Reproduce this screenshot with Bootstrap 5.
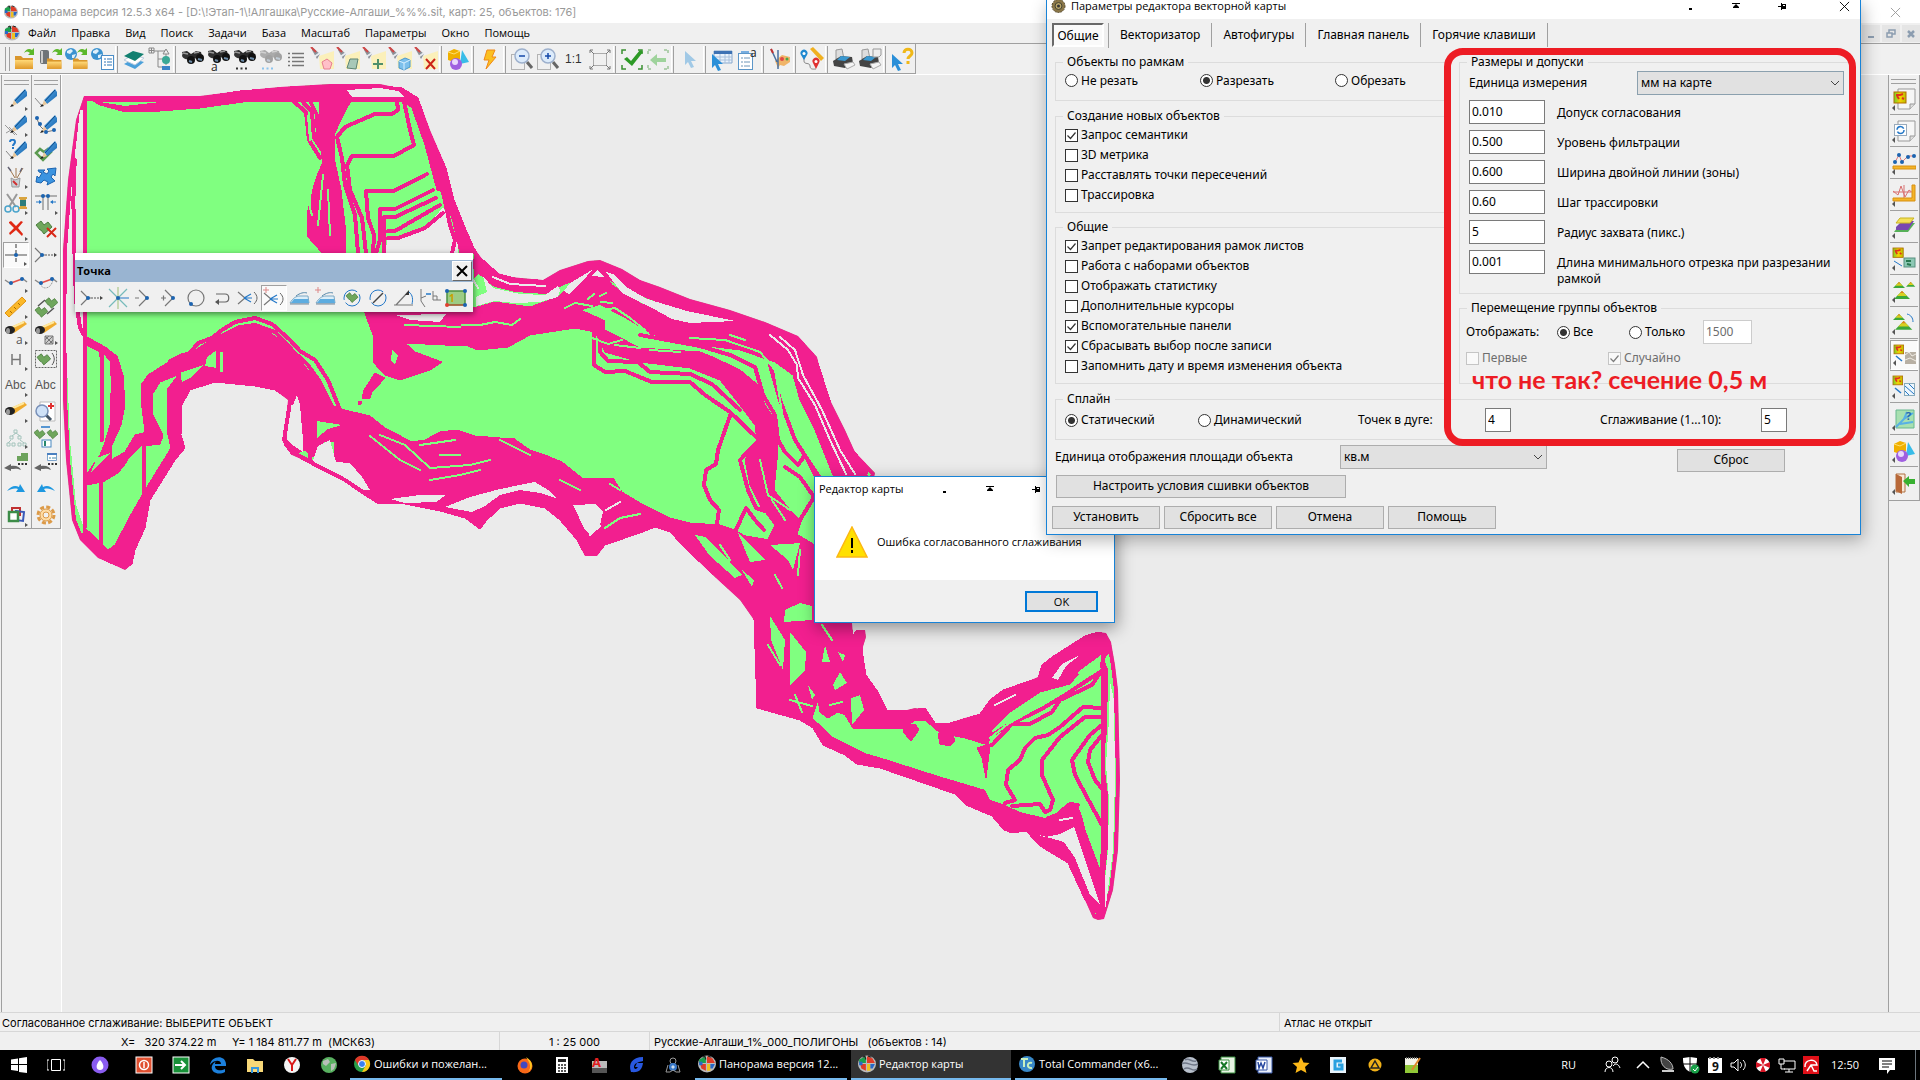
<!DOCTYPE html>
<html lang="ru">
<head>
<meta charset="utf-8">
<meta name="viewport" content="width=device-width, initial-scale=1">
<title>Панорама</title>
<link rel="stylesheet" href="https://cdn.jsdelivr.net/npm/bootstrap@5.3.0/dist/css/bootstrap.min.css">
<style>
:root{--face:#f0f0f0;--map:#ebebeb;--edge:#a0a0a0;--accent:#1883d7}
body{font:11px/16px "Open Sans","Noto Sans",sans-serif;color:#000;background:var(--face);overflow:hidden}
button,input,select{font:inherit;color:inherit}
button{padding:0;border:0;background:none}
.app-title{height:23px;background:#fff;color:#999;font-family:Inter,"Noto Sans",sans-serif}
.app-title button{margin-right:19px}
.app-menu{height:20px}
.app-menu a{color:#000;text-decoration:none}
.menu-links{column-gap:15px}
.mdi{gap:2px;color:#8c9db0}
.mdi button{width:18px;height:17px;background:#e5e5e5;display:block}
.main-tools{height:32px;border-top:1px solid var(--edge);border-bottom:1px solid #fff}
.main-strip{height:30px;padding-left:11px;border-right:1px solid var(--edge);border-bottom:1px solid var(--edge);position:relative}
.grip-v{position:absolute;left:5px;top:3px;width:5px;height:24px;border:solid var(--edge);border-width:0 1px}
.tool{width:26px;height:26px;display:flex;align-items:center;justify-content:center;position:relative}
.tool svg{width:24px;height:24px;display:block}
.tool.pressed{background:#fafafa;border:1px solid;border-color:var(--edge) #fff #fff var(--edge)}
.tool.more::after{content:"";position:absolute;right:1px;bottom:1px;border:solid transparent;border-width:2px 0 2px 3px;border-left-color:#555}
.bar-sep{width:6px;height:26px;border-left:1px solid #fff;position:relative}
.bar-sep::before{content:"";position:absolute;left:1px;top:0;height:27px;border-left:1px solid var(--edge)}
.work{min-height:0}
.side{width:62px;padding-left:1px;border-right:1px solid #fff}
.side-in{border-left:1px solid var(--edge);height:100%}
.side-col{width:30px;padding:5px 0 0 1px;border-right:1px solid var(--edge);border-bottom:1px solid var(--edge)}
.grip-h{height:5px;margin:0 2px 1px 1px;border:solid var(--edge);border-width:1px 0}
.rside{width:32px;border-left:1px solid var(--edge)}
.rcol{padding:4px 1px 0;border-right:1px solid var(--edge);border-bottom:1px solid var(--edge)}
.rcol .tool{width:28px;height:30px;margin:0 0 2px;box-shadow:0 1px 0 var(--edge)}
.rcol .tool:last-child{box-shadow:none}
.rcol .tool::after{content:"";position:absolute;left:2px;bottom:3px;border:solid transparent;border-width:3px 3px 3px 0;border-right-color:#555}
.rcol .grip-h{margin-bottom:0}
.map-pane{background:var(--map);min-width:0}
.map-pane>svg{display:block;width:100%;height:100%}
.status{height:19px;border-top:1px solid #d7d7d7;font-family:Inter,"Noto Sans",sans-serif}
.status>div{padding:2px 0 0 2px;white-space:pre}
.status .cell{border-left:1px solid #d7d7d7;padding-left:4px}
.status .c-atlas{width:641px}.status .c-xy{width:499px;padding-left:121px}.status .c-scale{width:150px;padding-left:0}
.win{position:absolute;background:var(--face)}
.palette{left:75px;top:253px;width:398px;height:59px;box-shadow:1px 2px 6px rgba(0,0,0,.5)}
.palette-title{height:22px;background:#99b4d1;font-weight:700;padding-left:2px}
.palette-close{width:20px;height:20px;background:var(--face);border:1px solid;border-color:#fff #696969 #696969 #fff;margin-right:1px;display:flex;align-items:center;justify-content:center}
.palette-top{height:7px;background:#fff}
.palette-tools{padding:3px 0 0 4px}
.msg{left:814px;top:476px;width:301px;height:147px;border:1px solid var(--accent);background:#fff;box-shadow:2px 5px 16px rgba(0,0,0,.4)}
.msg-title span{width:106px}
.msg-body{padding:6px 0 0 21px;gap:9px}
.msg-foot{height:42px;background:var(--face);padding:11px 16px 0 0}
.msg-ok{width:73px;height:21px;border:2px solid #0078d7;background:#e1e1e1}
.dlg{left:1046px;top:0;width:815px;height:535px;border:1px solid var(--accent);border-top:0;box-shadow:2px 5px 16px rgba(0,0,0,.3);font:12px/16px "Noto Sans","Open Sans",sans-serif}
.dlg-title{height:19px;background:#fff;font-family:"Open Sans",sans-serif;font-size:11px;padding:0 10px 0 4px}
.dlg-title span{padding-left:5px;margin-top:-2px}
.dlg-title button,.msg-title button{width:46px;height:12px}
.dlg-title svg,.msg-title svg{display:block}
.dlg-title .x-btn{width:45px;padding-left:34px}
.dlg-tabs{padding:4px 0 0 5px;height:29px}
.dlg-tabs button{height:24px;padding:0 11px 1px;border-right:1px solid var(--edge)}
.dlg-tabs button.on{width:52px;padding:2px 0 0;margin-right:4px;background:#fafafa;border:2px solid;border-color:#696969 #fff #fff #696969;height:24px}
.dlg-tabs .bar{width:1px;background:var(--edge)}
.dlg-body{padding:6px 6px 0 8px}
.grp{border:1px solid #dcdcdc;margin:0;padding:0 9px;min-width:0}
.grp legend{float:none;width:auto;margin:0 0 0 -2px;padding:0 4px;font-size:12px;line-height:16px}
.g-cut{height:47px}.g-cut .opt{flex:0 0 135px;padding-top:1px}
.g-new,.g-gen{padding:1px 9px 7px}
.g-new{margin-top:7px}.g-gen{margin-top:6px}
.g-size{height:240px}
.unit-row{padding-top:1px;margin-bottom:5px}
.g-move{height:84px;margin-top:6px;padding:4px 6px 0}
.g-move legend{margin-left:1px}
.g-move span{width:91px}.g-move .w1{width:72px}.g-move .w2{width:74px}.g-move .w3{width:142px}.g-move .fld{width:49px}
.g-spl{height:49px;margin-top:7px;padding-top:1px}
.g-spl .w1{width:133px}.g-spl .w2{width:160px}.g-spl .w3{width:127px}.g-spl .w4{width:161px;margin-left:89px}
.g-spl .fld{width:26px}
.opt{display:flex;align-items:center;height:20px;gap:3px}
.opt input{appearance:none;width:13px;height:13px;margin:0;border:1px solid #333;background:#fff;flex:none}
.opt input[type=radio]{border-radius:50%}
.opt input[type=radio]:checked{background:radial-gradient(circle,#333 0 3px,#fff 4px)}
.opt input[type=checkbox]:checked{background:#fff url("data:image/svg+xml,%3Csvg xmlns='http://www.w3.org/2000/svg' viewBox='0 0 11 11'%3E%3Cpath d='M1.5 5.5l3 3 5-6' fill='none' stroke='%23333' stroke-width='1.2'/%3E%3C/svg%3E")}
.opt.off{color:#6d6d6d}.opt.off input{border-color:#aaa;opacity:.6}
.fld{height:24px;border:1px solid #7a7a7a;background:#fff;padding:0 2px 2px;border-radius:0}
.fld:disabled{border-color:#ccc;color:#6d6d6d}
.pick{width:207px;height:24px;border:1px solid #adadad;border-radius:0;padding:0 3px;appearance:none;background:#e1e1e1 url("data:image/svg+xml,%3Csvg xmlns='http://www.w3.org/2000/svg' viewBox='0 0 10 10'%3E%3Cpath d='M1 3l4 4 4-4' fill='none' stroke='%23444'/%3E%3C/svg%3E") no-repeat right 3px center/10px}
.pick.unit{border-color:#8ba0ae}
.push{height:23px;width:108px;border:1px solid #adadad;background:#e1e1e1;padding-bottom:1px}
.area-row{margin-top:5px}.area-row label{width:285px;margin-top:4px}.area-row .push{margin:4px 0 0 130px}
.push.wide{width:290px;margin:3px 0 0 1px}
.push-row{margin:8px 0 0 -3px;gap:4px}
.colL{width:391px}.colR{width:395px}
.size-row{gap:12px;height:30px}
.size-row .fld{width:76px}.size-row label{margin-top:5px}
.note-box{position:absolute;left:397px;top:48px;width:412px;height:398px;border:7px solid #ed1c24;border-radius:19px;pointer-events:none}
.note-text{position:absolute;left:425px;top:364px;font:700 25px/30px Lato,sans-serif;color:#ed1c24;white-space:nowrap}
.taskbar{height:30px;background:#000;color:#fff}
.tk{width:37px;height:30px;display:flex;align-items:center;justify-content:center;flex:none}
.tk svg,.tk-win svg{width:18px;height:18px;flex:none}
.tk-win{width:152px;height:30px;padding-left:3px;gap:3px;display:flex;align-items:center;border-bottom:2px solid #76b9ed;flex:none;white-space:nowrap}
.tk-win.active{width:160px;background:#333;padding-left:7px}
.tk-first{margin-left:3px}
.tk-set{padding-left:4px}
.tk-gap{width:7px}
.tray .tk{width:24px}
</style>
<script src="https://cdn.jsdelivr.net/npm/bootstrap@5.3.0/dist/js/bootstrap.bundle.min.js"></script>
</head>
<body class="d-flex flex-column vh-100 position-relative">

<svg width="0" height="0" class="position-absolute" aria-hidden="true">
<defs>
<linearGradient id="gy" x1="0" y1="0" x2="0" y2="1"><stop offset="0" stop-color="#ffd978"/><stop offset="1" stop-color="#e0992a"/></linearGradient>
<linearGradient id="gb" x1="0" y1="0" x2="1" y2="1"><stop offset="0" stop-color="#5ab0f0"/><stop offset="1" stop-color="#1560a8"/></linearGradient>
<linearGradient id="heat"><stop offset="0" stop-color="#6fd12a"/><stop offset=".5" stop-color="#f8d000"/><stop offset="1" stop-color="#b8c000"/></linearGradient>
<g id="p-folder"><path d="M0 3h6l2 2h10v11H0z" fill="#d9962c"/><path d="M0 7h18v9H0z" fill="url(#gy)"/></g>
<g id="p-arr"><path d="M0 5C2 1 5 0 8 2l2-2v7H4l2-2C4 3 2 3 0 5z" fill="#5cb82a"/></g>
<g id="p-globe"><circle cx="6" cy="6" r="6" fill="#3b93d0"/><path d="M2 3l4-2 2 2-3 3-3-1zM7 7l4-1-2 4-2 0z" fill="#dff0fa"/></g>
<g id="p-pencil"><path d="M21 2l2 3v4L13 17l-3-4z" fill="url(#gb)"/><path d="M10 13l3 4-5 2z" fill="#e8c79a"/><path d="M8 17l2 2-4 1z" fill="#222"/><path d="M21 3L11 14" stroke="#0d4a85"/></g>
<g id="p-green"><path d="M0 5l5-4 3 4 4-3 4 5-8 7-3-4-1 0z" fill="#6fa65c" stroke="#4b7d3e"/></g>
<g id="p-bino"><path d="M2 3l5-1 4 3 5-3 5 1 1 4-4 3-5-1-3 2-6-3z" fill="#2a2a2a"/><ellipse cx="6" cy="7" rx="4" ry="3" fill="#333" transform="rotate(25 6 7)"/><ellipse cx="11" cy="11" rx="4" ry="4" fill="#111"/><ellipse cx="20" cy="9" rx="4" ry="4" fill="#111"/><path d="M3 4l5 1M14 4l5-1" stroke="#999" stroke-width="1.500"/><path d="M9 12l3 1M18 10l4 1" stroke="#6d8ca8" stroke-width="2"/></g>
<g id="p-torch"><path d="M9 9L24 4V22H10z" fill="#fff0a8" opacity=".75"/><path d="M2 0l8 7-3 5-5-9z" fill="#8c9198"/><path d="M1 0l5 5" stroke="#d04848" stroke-width="2"/><path d="M4 10l6-4" stroke="#e8ecf0" stroke-width="2"/></g>
<g id="p-flash"><path d="M7 9L20 3l3 3-13 9z" fill="#f0ac2e"/><path d="M9 9l11-5" stroke="#ffe9a0" stroke-width="2"/><ellipse cx="6" cy="12" rx="5" ry="4" fill="#222"/><ellipse cx="4" cy="13" rx="2" ry="3" fill="#999"/></g>
<g id="p-heat"><rect width="12" height="11" fill="url(#heat)" stroke="#b36b00"/><path d="M2 3h4l3-1M3 4l2 3M8 6l2 1" stroke="#e0301c" stroke-width="2" fill="none"/></g>
<g id="p-cur"><path d="M0 0v14l3-3 3 6 3-1-3-6h5z" fill="#2a8fd8"/></g>
<symbol id="logo" viewBox="0 0 16 16"><ellipse cx="8" cy="8" rx="8" ry="7.500" fill="#bbb"/><path d="M1 4l6-3v6H1z" fill="#1ba04c"/><path d="M8 1l5 2 2 4H8z" fill="#e03c28"/><path d="M2 8h5v6l-4-2z" fill="#e03c28"/><path d="M8 8h3v6H8z" fill="#f0c020"/><path d="M1 6h3v3H1zM11 8h4l-2 4h-2z" fill="#2868c8"/><path d="M4 2l2-1 1 3M9 1l3 1" stroke="#222" fill="none"/></symbol>
<symbol id="open" viewBox="0 0 24 24"><use href="#p-folder" x="3" y="6"/><use href="#p-arr" x="12" y="1"/></symbol>
<symbol id="opendb" viewBox="0 0 24 24"><rect x="2" y="3" width="9" height="14" rx="2" fill="#6f7478"/><path d="M4 4v12" stroke="#ccc" stroke-width="2"/><use href="#p-folder" transform="translate(9 9) scale(.8)"/><use href="#p-arr" x="14" y="1"/></symbol>
<symbol id="openweb" viewBox="0 0 24 24"><use href="#p-globe" x="1" y="1"/><use href="#p-folder" transform="translate(9 9) scale(.8)"/><use href="#p-arr" x="13" y="1"/></symbol>
<symbol id="weblist" viewBox="0 0 24 24"><use href="#p-globe" x="1" y="1"/><rect x="11.500" y="8.500" width="12" height="14" fill="#fff" stroke="#4b8ec8"/><path d="M14 12h2m1 0h5M14 15h2m1 0h5M14 18h2m1 0h5" stroke="#2e75b5"/></symbol>
<symbol id="layers" viewBox="0 0 24 24"><path d="M2 17l9-5 11 3-9 7z" fill="#4aa0da"/><path d="M2 13l9-5 11 3-9 7z" fill="#fff" stroke="#bcd"/><path d="M2 9l9-5 11 3-9 7z" fill="#128070"/></symbol>
<symbol id="tree" viewBox="0 0 24 24"><path d="M1 1h5v5H1zM1 3.500h5M3.500 1v5M6 4h12v14M10 4v16h4M10 12h5" fill="none" stroke="#888"/><circle cx="18" cy="13" r="4" fill="#3aa896"/><path d="M18 2l3 5h-6z" fill="#eee" stroke="#888"/><rect x="14" y="19" width="8" height="4" fill="#3b84c8"/></symbol>
<symbol id="bino" viewBox="0 0 24 24"><use href="#p-bino" y="2"/></symbol>
<symbol id="binoa" viewBox="0 0 24 24"><use href="#p-bino" y="1"/><text x="5" y="24" font-size="12" fill="#222">a</text></symbol>
<symbol id="binod" viewBox="0 0 24 24"><use href="#p-bino" y="1"/><path d="M4 21.500h12" stroke="#333" stroke-width="2" stroke-dasharray="2 2.500"/></symbol>
<symbol id="binox" viewBox="0 0 24 24"><g opacity=".35"><use href="#p-bino" y="1"/></g><path d="M4 21.500h12" stroke="#8cc4ee" stroke-width="2" stroke-dasharray="2 2.500"/></symbol>
<symbol id="list" viewBox="0 0 24 24"><path d="M4 6.500h2m2 0h12M4 10.500h2m2 0h12M4 14.500h2m2 0h12M4 18.500h2m2 0h12" stroke="#777" stroke-width="1.500"/></symbol>
<symbol id="t1" viewBox="0 0 24 24"><use href="#p-torch"/><path d="M12 15l5-3 5 4-2 6h-6z" fill="#ffc0c8" stroke="#e88090"/></symbol>
<symbol id="t2" viewBox="0 0 24 24"><use href="#p-torch"/><path d="M14 12h8l-2 10-9-1z" fill="#a8c8b8" stroke="#5c8474"/></symbol>
<symbol id="t3" viewBox="0 0 24 24"><use href="#p-torch"/><path d="M16 12v10M11 17h10" stroke="#4f8f6a" stroke-width="2"/></symbol>
<symbol id="t4" viewBox="0 0 24 24"><use href="#p-torch"/><path d="M11 14l6-3 5 2v7l-6 3-5-2z" fill="#7cc0ec" stroke="#4a98cc"/><path d="M11 14l5 2 6-3M16 16v7" stroke="#d8f0ff" fill="none"/></symbol>
<symbol id="t5" viewBox="0 0 24 24"><use href="#p-torch"/><path d="M12 12l9 10M21 12l-9 10" stroke="#cc2418" stroke-width="2"/></symbol>
<symbol id="shapes" viewBox="0 0 24 24"><path d="M16 3l7 12-9 2z" fill="#38bce8"/><path d="M2 5l6-3 6 2v8l-6 3-6-2z" fill="#f0b000"/><path d="M2 5l6 2 6-3" stroke="#ffe070" fill="none"/><circle cx="10" cy="17" r="6" fill="#a060e0"/><circle cx="9" cy="15" r="3" fill="#ead8fc"/></symbol>
<symbol id="bolt" viewBox="0 0 24 24"><path d="M9 3h8l-3 7h4L8 22l3-9H6z" fill="#fbc020" stroke="#f08818"/></symbol>
<symbol id="zout" viewBox="0 0 24 24"><rect x="1.500" y="7.500" width="13" height="15" fill="none" stroke="#777" stroke-dasharray="1 1"/><path d="M17 15l5 6" stroke="#666" stroke-width="3"/><circle cx="12" cy="9" r="7" fill="#dcebfb" stroke="#9db0cc" stroke-width="1.500"/><path d="M9 9h6" stroke="#1548a8" stroke-width="1.500"/></symbol>
<symbol id="zin" viewBox="0 0 24 24"><use href="#zout" width="24" height="24"/><path d="M12 6v6" stroke="#1548a8" stroke-width="1.500"/></symbol>
<symbol id="one" viewBox="0 0 24 24"><text x="3" y="16" font-size="12" font-family="Liberation Sans" fill="#333">1:1</text></symbol>
<symbol id="fit" viewBox="0 0 24 24"><rect x="5.500" y="6.500" width="13" height="12" fill="none" stroke="#666" stroke-dasharray="1 1"/><path d="M2 6V3h3M2 3l4 4M19 3h3v3M22 3l-4 4M2 19v3h3M2 22l4-4M19 22h3v-3M22 22l-4-4" fill="none" stroke="#777"/></symbol>
<symbol id="okk" viewBox="0 0 24 24"><path d="M2 7V3h4M18 3h4v4M2 18v4h4M18 22h4v-4" fill="none" stroke="#3a9030" stroke-width="1.500"/><path d="M4 12l3-2 4 4L20 3l3 2-11 14z" fill="#2d9a26"/></symbol>
<symbol id="backk" viewBox="0 0 24 24"><g opacity=".45"><path d="M2 7V3h4M18 3h4v4M2 18v4h4M18 22h4v-4" fill="none" stroke="#3a9030" stroke-width="1.500" stroke-dasharray="3 1"/><path d="M4 13l7-6v4h9v4h-9v4z" fill="#3fb038"/></g></symbol>
<symbol id="curx" viewBox="0 0 24 24"><use href="#p-cur" x="7" y="4" opacity=".4"/></symbol>
<symbol id="curtab" viewBox="0 0 24 24"><path d="M4 4h18v12H4z" fill="#eaf2fb" stroke="#88a8cc"/><path d="M4 4h18v3H4z" fill="#3e72b4"/><path d="M4 10h18M4 13h18M10 7v9M15 7v9M19 7v9" stroke="#a8c0dc"/><use href="#p-cur" x="2" y="7"/></symbol>
<symbol id="lista" viewBox="0 0 24 24"><rect x="2.500" y="6.500" width="14" height="16" fill="#fff" stroke="#5c96c8"/><path d="M5 6V4h8v2" fill="#78aee0"/><path d="M5 11h2m1 0h6M5 15h2m1 0h6M5 19h2m1 0h6" stroke="#6f96b8"/><text x="14" y="10" font-size="12" fill="#222">a</text></symbol>
<symbol id="paint" viewBox="0 0 24 24"><path d="M7 14l7-6 8 2v5l-6 4-4-1-2 3z" fill="#f0b468"/><circle cx="14" cy="12" r="2" fill="#e04848"/><circle cx="19" cy="12" r="1.500" fill="#48a848"/><path d="M3 2l6 13M10 3v19" stroke="#4870a0" stroke-width="1.500"/><path d="M3 2l2 4" stroke="#c03030" stroke-width="2"/></symbol>
<symbol id="route" viewBox="0 0 24 24"><path d="M4 10v4c0 4 6 1 6 5s4 3 6 3" fill="none" stroke="#888"/><path d="M10 2l3-2 11 11-3 3z" fill="#f0b020"/><path d="M4 13l-3-5a3.500 3.500 0 1 1 6 0z" fill="#1e88d0"/><circle cx="4" cy="6.500" r="1.500" fill="#fff"/><path d="M16 22l-3-6a3.500 3.500 0 1 1 6 0z" fill="#e03030"/><circle cx="16" cy="14.500" r="1.500" fill="#fff"/></symbol>
<symbol id="print" viewBox="0 0 24 24"><path d="M4 3l6-1 2 10H4z" fill="#ddd" stroke="#999"/><path d="M1 14l8-5 11 1 1 6-8 5-11-2z" fill="#444"/><path d="M9 9l9 1-5 4-8-1z" fill="#3a98d0"/><path d="M12 17l9-2 2 3-8 4z" fill="#f4f4f4" stroke="#aaa"/></symbol>
<symbol id="print2" viewBox="0 0 24 24"><use href="#print" width="24" height="24"/><path d="M15 2h8v6l-2 2h-6z" fill="#eee" stroke="#999"/></symbol>
<symbol id="help" viewBox="0 0 24 24"><use href="#p-cur" x="2" y="7"/><path d="M14 6c0-5 8-5 8 0 0 3-4 3-4 6M18 14v3" stroke="#f0b818" stroke-width="3" fill="none"/></symbol>
<symbol id="pen" viewBox="0 0 24 24"><use href="#p-pencil"/></symbol>
<symbol id="pen2" viewBox="0 0 24 24"><path d="M1 12l10 10M5 14l8 8M2 20l10-6" stroke="#999"/><use href="#p-pencil"/></symbol>
<symbol id="pen3" viewBox="0 0 24 24"><path d="M2 12l7 8" stroke="#888"/><use href="#p-pencil"/><path d="M6 3c0-3 5-3 5 0 0 2-2 2-2 4M9 8v2" stroke="#2478c8" stroke-width="2" fill="none"/></symbol>
<symbol id="pen4" viewBox="0 0 24 24"><path d="M1 11l7 8" stroke="#888"/><use href="#p-pencil"/></symbol>
<symbol id="pen5" viewBox="0 0 24 24"><path d="M3 6l3 7 6 6 9-2" stroke="#777" fill="none"/><use href="#p-pencil"/><g fill="#1c64b0"><circle cx="3" cy="5" r="2"/><circle cx="6" cy="11" r="2"/><circle cx="12" cy="19" r="2"/><circle cx="20" cy="17" r="2"/></g></symbol>
<symbol id="pen6" viewBox="0 0 24 24"><path d="M2 14l4-4 4 3 4-3 3 3-8 8z" fill="none" stroke="#5c9a50" stroke-width="2.500"/><use href="#p-pencil"/></symbol>
<symbol id="brush" viewBox="0 0 24 24"><path d="M7 13l4 2 5-2-1 9H8z" fill="#c8d0d6" stroke="#999"/><path d="M5 3l6 10M12 3v10M19 3l-6 10" stroke="#a07850"/><path d="M4 2l3 4M18 3l-2 4" stroke="#667" stroke-width="1.500"/><path d="M9 16l4 4" stroke="#d03030" stroke-width="2"/></symbol>
<symbol id="scis" viewBox="0 0 24 24"><path d="M3 3l9 13M13 3L5 16" stroke="#999" stroke-width="2"/><circle cx="4" cy="18" r="3" fill="none" stroke="#4aa4cc" stroke-width="1.500"/><circle cx="12" cy="18" r="3" fill="none" stroke="#4aa4cc" stroke-width="1.500"/><path d="M15 6h8v2h-1v8h1v2h-8v-2h1V8h-1z" fill="#d8a440"/><path d="M16 9h6v6h-6z" fill="#2c7c7c"/></symbol>
<symbol id="delx" viewBox="0 0 24 24"><path d="M5 5l2-1 5 5 5-5 2 1-5 6 5 6-1 2-6-6-6 5-1-2 5-5-5-5z" fill="#e02814"/></symbol>
<symbol id="pnt" viewBox="0 0 24 24"><path d="M1 12h22" stroke="#888" stroke-width="1.500"/><path d="M12 1v4m0 2v4m0 4v4" stroke="#777" stroke-width="1.500"/><circle cx="12" cy="12" r="2" fill="#1c64b0"/></symbol>
<symbol id="seg" viewBox="0 0 24 24"><path d="M1 11l6 4M18 9l5 4" stroke="#888" stroke-width="1.500"/><path d="M7 14l11-4" stroke="#e05048" stroke-width="1.500"/><circle cx="7" cy="14" r="2" fill="#1c64b0"/><circle cx="18" cy="10" r="2" fill="#1c64b0"/></symbol>
<symbol id="segarc" viewBox="0 0 24 24"><path d="M6 14c2 8 12 6 13-4" fill="none" stroke="#999" stroke-dasharray="2 1"/><use href="#seg" width="24" height="24"/></symbol>
<symbol id="ruler" viewBox="0 0 24 24"><path d="M1 18L18 2l4 4L5 22z" fill="#fbb828" stroke="#e09410"/><path d="M6 16l2 2M10 12l2 2M14 8l2 2" stroke="#a86c00"/></symbol>
<symbol id="fla" viewBox="0 0 24 24"><use href="#p-flash" y="-3"/><text x="12" y="23" font-size="12" fill="#555">a</text></symbol>
<symbol id="flh" viewBox="0 0 24 24"><use href="#p-flash" y="-3"/><path d="M11 15h8v8h-8zM11 19l4-4M11 23l8-8M15 23l4-4M11 15l8 8" fill="#ccc" stroke="#777"/></symbol>
<symbol id="flash" viewBox="0 0 24 24"><use href="#p-flash"/></symbol>
<symbol id="hh" viewBox="0 0 24 24"><path d="M8 7v11M16 7v11M8 12.500h8" stroke="#777" stroke-width="1.500"/></symbol>
<symbol id="abc" viewBox="0 0 24 24"><text x="1" y="16" font-size="12" font-family="Liberation Sans" fill="#555">Abc</text></symbol>
<symbol id="org" viewBox="0 0 24 24"><path d="M10 5h3v3h-3zM6 11h3v3H6zM14 11h3v3h-3zM3 18h3v3H3zM8 18h3v3H8zM14 18h3v3h-3zM19 18h3v3h-3zM12 8l-4 3M12 8l4 3M7 15l-3 3M16 15l4 3" fill="none" stroke="#a4c4bc"/></symbol>
<symbol id="undos" viewBox="0 0 24 24"><path d="M13 5h4V2h7v8H13z" fill="#6da35c"/><path d="M0 17l7-4v2c5-1 9 1 10 4-4-2-7-1-10-1v2z" fill="#666"/><path d="M14 13h9" stroke="#333" stroke-width="2" stroke-dasharray="2 1.500"/></symbol>
<symbol id="undol" viewBox="0 0 24 24"><path d="M13.500 2.500h9v7h-9z" fill="#fff" stroke="#7ca4cc"/><path d="M13 3h10" stroke="#4a80c0" stroke-width="2"/><path d="M15 7h2m1 0h4" stroke="#48a"/><path d="M0 17l7-4v2c5-1 9 1 10 4-4-2-7-1-10-1v2z" fill="#666"/><path d="M14 13h9" stroke="#333" stroke-width="2" stroke-dasharray="2 1.500"/></symbol>
<symbol id="fwd" viewBox="0 0 24 24"><path d="M3 14c4-5 8-6 12-4l1-3 5 8-9 0 2-3c-4-1-7 0-11 2z" fill="#1e98e0"/></symbol>
<symbol id="bwd" viewBox="0 0 24 24"><path d="M21 14c-4-5-8-6-12-4L8 7l-5 8 9 0-2-3c4-1 7 0 11 2z" fill="#1e98e0"/></symbol>
<symbol id="sqs" viewBox="0 0 24 24"><path d="M8 5h8v7H8z" fill="none" stroke="#c03030" stroke-width="2"/><path d="M12 8l8 1-1 9-8-1z" fill="none" stroke="#3858b8" stroke-width="2"/><path d="M5 9h9v9H5z" fill="#fff" stroke="#3c8c48" stroke-width="2.500"/></symbol>
<symbol id="gear" viewBox="0 0 24 24"><circle cx="12" cy="12" r="8" fill="none" stroke="#dc9a48" stroke-width="3" stroke-dasharray="4 2.280"/><circle cx="12" cy="12" r="6" fill="#ffdca4" stroke="#dc9a48"/><circle cx="12" cy="12" r="3" fill="#f0f0f0" stroke="#dc9a48"/></symbol>
<symbol id="move4" viewBox="0 0 24 24"><path d="M4 5l7 0-2 2 4 2 2-3-2-2 9-1-1 8-2-2-2 3 4 4-8 4 1-3-4-2-3 3-5-1 1-6 2 2 3-5-3-1z" fill="#3c94e0" stroke="#1c64b0"/></symbol>
<symbol id="align" viewBox="0 0 24 24"><path d="M1 5h22M9 5v14M14 5v14" stroke="#999" stroke-width="1.500"/><path d="M2 11h5M22 11h-5" stroke="#2478c8"/><path d="M5 9l3 2-3 2M19 9l-3 2 3 2" fill="#2478c8"/><circle cx="9" cy="5" r="2" fill="#1c64b0"/><circle cx="14" cy="5" r="2" fill="#1c64b0"/></symbol>
<symbol id="gdel" viewBox="0 0 24 24"><use href="#p-green" x="2" y="3"/><path d="M13 11l9 9M22 11l-9 9" stroke="#d82818" stroke-width="2"/></symbol>
<symbol id="yarr" viewBox="0 0 24 24"><path d="M1 5l7 7-7 7M8 12h3" fill="none" stroke="#777" stroke-width="1.200"/><path d="M11 12h9" stroke="#555" stroke-dasharray="2 1"/><path d="M20 10l3 2-3 2z" fill="#444"/><circle cx="8" cy="12" r="2" fill="#1c64b0"/></symbol>
<symbol id="mvsh" viewBox="0 0 24 24"><use href="#p-green" transform="translate(1 11) scale(.8)"/><use href="#p-green" transform="translate(11 2) scale(.8)"/><path d="M4 11l7-6M20 13l-7 6" stroke="#555" stroke-width="1.500"/></symbol>
<symbol id="rot" viewBox="0 0 24 24"><rect x="1.500" y="3.500" width="21" height="17" fill="none" stroke="#666" stroke-dasharray="2 1"/><use href="#p-green" transform="translate(3 6) scale(.85)"/><path d="M18 6c3 4 3 8 0 12" fill="none" stroke="#555"/></symbol>
<symbol id="zdoc" viewBox="0 0 24 24"><path d="M6 3h15v19H6z" fill="#fff" stroke="#bbb"/><path d="M12 16l5 5" stroke="#456" stroke-width="3"/><circle cx="8" cy="12" r="6" fill="#cfe2f8" stroke="#7890b8" stroke-width="1.500"/><path d="M17 4v6M14 7h6" stroke="#e03030" stroke-width="2"/></symbol>
<symbol id="conv" viewBox="0 0 24 24"><use href="#p-green" transform="translate(0 4) scale(.7)"/><use href="#p-green" transform="translate(13 4) scale(.7)"/><path d="M7 2h9" stroke="#2478c8" stroke-width="1.500"/><rect x="8" y="15" width="9" height="7" fill="#fff" stroke="#4888c0"/><path d="M10 16h2v5h-2z" fill="#28886c"/></symbol>
<symbol id="star6" viewBox="0 0 24 24"><path d="M3 3l18 18M21 3L3 21" stroke="#7bb" stroke-width="1.200"/><path d="M12 1v22" stroke="#b8d0a0" stroke-width="1.500"/><path d="M12 12h11" stroke="#2478c8"/><circle cx="12" cy="12" r="2" fill="#1c64b0"/></symbol>
<symbol id="minp" viewBox="0 0 24 24"><path d="M7 4l8 8-8 8M3 12h4" fill="none" stroke="#777" stroke-width="1.200"/><circle cx="15" cy="12" r="2" fill="#1c64b0"/></symbol>
<symbol id="plup" viewBox="0 0 24 24"><path d="M7 4l8 8-8 8M3 12h5M5.500 9.500v5" fill="none" stroke="#777" stroke-width="1.200"/><circle cx="15" cy="12" r="2" fill="#1c64b0"/></symbol>
<symbol id="circ" viewBox="0 0 24 24"><circle cx="12" cy="12" r="8" fill="none" stroke="#777" stroke-width="1.200"/><circle cx="7" cy="18" r="2" fill="#1c64b0"/></symbol>
<symbol id="uturn" viewBox="0 0 24 24"><path d="M6 8h9c5 0 5 8 0 8H7" fill="none" stroke="#666" stroke-width="1.200"/><path d="M9 13l-4 3 4 3z" fill="#555"/></symbol>
<symbol id="fan" viewBox="0 0 24 24"><path d="M2 6l7 6-7 6" fill="none" stroke="#777" stroke-width="1.200"/><path d="M8 12l7-4M8 12h8M8 12l7 4" stroke="#2478c8" stroke-width="1.200"/><path d="M18 6c4 4 4 8 0 12" fill="none" stroke="#666"/></symbol>
<symbol id="fan2" viewBox="0 0 24 24"><use href="#fan" width="24" height="24" y="1"/><path d="M4 1v6M1 4h6" stroke="#d88"/></symbol>
<symbol id="iron" viewBox="0 0 24 24"><path d="M2 17c3-5 6-7 10-7h8l1 7z" fill="#dceef8" stroke="#7ca8c4"/><path d="M6 13h14l1 4H3z" fill="#5cace0"/><path d="M8 10c4-3 8-4 11-3" fill="none" stroke="#58a"/><path d="M2 18h19" stroke="#789"/></symbol>
<symbol id="iron2" viewBox="0 0 24 24"><use href="#iron" width="24" height="24"/><path d="M4 1v6M1 4h6" stroke="#d88"/></symbol>
<symbol id="rotg" viewBox="0 0 24 24"><circle cx="12" cy="12" r="8" fill="none" stroke="#2478c8" stroke-dasharray="20 3"/><use href="#p-green" transform="translate(6 6) scale(.75)"/></symbol>
<symbol id="rotl" viewBox="0 0 24 24"><circle cx="12" cy="12" r="8" fill="none" stroke="#2478c8" stroke-dasharray="20 3"/><path d="M7 17L17 7" stroke="#444" stroke-width="1.500"/></symbol>
<symbol id="ang" viewBox="0 0 24 24"><path d="M4 19L16 6M2 19h19" stroke="#777" stroke-width="1.200"/><path d="M17 6c4 3 4 8 3 12" fill="none" stroke="#2478c8"/><path d="M17 4v5h-4z" fill="#333"/></symbol>
<symbol id="perp" viewBox="0 0 24 24"><path d="M3 3v12l4 6M3 12l5-2M15 5v9h8M15 10h4v4" fill="none" stroke="#777"/><path d="M8 8h5" stroke="#2478c8" stroke-width="1.500"/></symbol>
<symbol id="rect1" viewBox="0 0 24 24"><rect x="3" y="5" width="18" height="14" fill="#9ccc84" stroke="#4c9040" stroke-width="1.500"/><text x="5" y="16" font-size="10" font-weight="bold" fill="#c8a000">1</text><path d="M3 19h18" stroke="#e04030"/><circle cx="3" cy="5" r="2" fill="#1c64b0"/><circle cx="21" cy="5" r="2" fill="#1c64b0"/><circle cx="21" cy="19" r="2" fill="#1c64b0"/><circle cx="3" cy="19" r="2" fill="#e04030"/></symbol>
<symbol id="r1" viewBox="0 0 24 24"><path d="M6 2h17v15l-5 5H6z" fill="#f6f6f6" stroke="#999"/><path d="M23 17h-5v5" fill="#ddd" stroke="#999"/><use href="#p-heat" x="2" y="5"/></symbol>
<symbol id="r2" viewBox="0 0 24 24"><path d="M6 2h17v15l-5 5H6z" fill="#f6f6f6" stroke="#999"/><path d="M23 17h-5v5" fill="#ddd" stroke="#999"/><rect x="2.500" y="5.500" width="12" height="11" fill="#fff" stroke="#9ab"/><circle cx="8.500" cy="11" r="3.500" fill="none" stroke="#2478c8" stroke-width="1.500" stroke-dasharray="9 2"/></symbol>
<symbol id="r3" viewBox="0 0 24 24"><path d="M3 11l4-7 3 7 6-6h6" fill="none" stroke="#e07878"/><g fill="#1c64b0"><circle cx="3" cy="11" r="2"/><circle cx="7" cy="4" r="2"/><circle cx="10" cy="11" r="2"/><circle cx="16" cy="6" r="2"/><circle cx="22" cy="5" r="2"/></g><path d="M1 15h23v3H1z" fill="#f4b428" stroke="#d89010"/></symbol>
<symbol id="r4" viewBox="0 0 24 24"><path d="M1 8l5 4 3-9 4 11 4-7 4 3M1 9h18M12 2v14" fill="none" stroke="#d87070"/><path d="M20 2h3v16H1v-3h19z" fill="#f4b428" stroke="#d89010"/></symbol>
<symbol id="r5" viewBox="0 0 24 24"><path d="M2 17l7-9h14l-7 9z" fill="#56b058"/><path d="M4 12l6-6h12l-6 9H4z" fill="#7848b0"/><path d="M4 8l4-5h14l-4 5z" fill="#f4e058" stroke="#c8b420"/></symbol>
<symbol id="r6" viewBox="0 0 24 24"><g transform="translate(1 1) scale(.85)"><use href="#p-heat"/></g><path d="M2 14l8 5" stroke="#2478c8"/><rect x="12" y="11" width="11" height="9" fill="#8cc8b4" stroke="#589080"/><path d="M14 14h5M15 17l4 1" stroke="#287850" fill="none" stroke-width="2"/></symbol>
<symbol id="hill" viewBox="0 0 24 24"><path d="M8 0l8 8H0z" fill="#3da83a"/><path d="M8 0l5 5H3z" fill="#d8d020"/><path d="M8 0l2 2H6z" fill="#e08020"/></symbol>
<symbol id="r7" viewBox="0 0 24 24"><use href="#hill" x="1" y="3" width="18" height="18"/><use href="#hill" x="14" y="3" width="14" height="14"/><use href="#hill" x="2" y="12" width="24" height="24"/></symbol>
<symbol id="r8" viewBox="0 0 24 24"><use href="#hill" x="1" y="3" width="18" height="18"/><use href="#hill" x="3" y="10" width="26" height="26"/><path d="M15 3c4 1 6 4 6 8" stroke="#2478c8" fill="none"/></symbol>
<symbol id="r9" viewBox="0 0 24 24"><g transform="translate(2 2) scale(.8)"><use href="#p-heat"/></g><path d="M4 13l6 5" stroke="#2478c8" stroke-width="1.500"/><rect x="13" y="9" width="11" height="12" fill="#b8b0a4"/><path d="M13 12l4-3 3 4 4-2M13 17l5-2 6 3" fill="none" stroke="#f0ece4"/></symbol>
<symbol id="r10" viewBox="0 0 24 24"><g transform="translate(1 1) scale(.8)"><use href="#p-heat"/></g><path d="M3 13l6 5" stroke="#2478c8" stroke-width="1.500"/><rect x="12.500" y="8.500" width="10" height="12" fill="#eef6fc" stroke="#8ab"/><path d="M13 11l9 8M13 16l4 4M17 9l5 5" stroke="#2478c8"/></symbol>
<symbol id="r11" viewBox="0 0 24 24"><path d="M4 3h18v18H4z" fill="#a8e0b0" stroke="#68b890"/><path d="M4 20l8-8 3-7M12 12l9-6M8 17l13-2" stroke="#58b0e4" stroke-width="2" fill="none"/><text x="14" y="13" font-size="11" font-weight="bold" fill="#2868b0">?</text></symbol>
<symbol id="door" viewBox="0 0 24 24"><path d="M4 3h9v18H4z" fill="#f8e8d8" stroke="#b07040"/><path d="M4 3l6 3v17l-6-3z" fill="#b86838"/><path d="M11 10l6-5v3h6v5h-6v3z" fill="#38b030"/></symbol>
<symbol id="k0" viewBox="0 0 18 18"><path d="M1 3.500l7-1V8H1zM9 2.300L17 1v7H9zM1 9h7v6L1 14zM9 9h8v8l-8-1z" fill="#fff"/></symbol>
<symbol id="k1" viewBox="0 0 18 18"><path d="M4.500 3.500h9v11h-9zM2 4H0v10h2M16 4h2v10h-2" fill="none" stroke="#fff"/></symbol>
<symbol id="k2" viewBox="0 0 18 18"><circle cx="9" cy="9" r="8.500" fill="#8a5cf0"/><path d="M9 4c5 5 4 10 0 10S4 9 9 4z" fill="#fff"/></symbol>
<symbol id="k3" viewBox="0 0 18 18"><rect x="1" y="1" width="16" height="16" fill="#e05030" stroke="#fff"/><circle cx="9" cy="9" r="4.500" fill="none" stroke="#fff" stroke-width="1.500"/><path d="M9 6v6" stroke="#fff" stroke-width="1.500"/></symbol>
<symbol id="k4" viewBox="0 0 18 18"><rect x="1" y="1" width="16" height="16" fill="#189038" stroke="#fff"/><path d="M3 9h10M9 5l4 4-4 4" fill="none" stroke="#fff" stroke-width="2"/></symbol>
<symbol id="k5" viewBox="0 0 18 18"><path d="M1 9C2 0 16-2 17 8v2H6c0 5 6 5 10 3v3C9 20 1 16 3 10c1-3 3-4 5-5-2 1-2 2-2 3h6c0-5-8-4-11 1z" fill="#1c80dc"/></symbol>
<symbol id="k6" viewBox="0 0 18 18"><path d="M1 3h6l2 2h8v11H1z" fill="#f8d878"/><path d="M5 17v-6h8v6h-2v-4H7v4z" fill="#3898e0"/></symbol>
<symbol id="k7" viewBox="0 0 18 18"><circle cx="9" cy="9" r="8" fill="#f4f4f4"/><path d="M5 3l4 6 4-6M9 9v6" fill="none" stroke="#d81818" stroke-width="2"/></symbol>
<symbol id="k8" viewBox="0 0 18 18"><circle cx="9" cy="9" r="8" fill="#58b060"/><path d="M3 5l5-2 2 3-4 4-3-2zM11 8l5-1-2 6-3 2z" fill="#b8c0b8"/></symbol>
<symbol id="chrome" viewBox="0 0 18 18"><circle cx="9" cy="9" r="8" fill="#28a048"/><path d="M2 5a8 8 0 0 1 14 0H9L5 10z" fill="#e03828"/><path d="M16 5a8 8 0 0 1-7 12l4-7-3-5z" fill="#f8c818"/><circle cx="9" cy="9" r="3.500" fill="#3880f0" stroke="#fff"/></symbol>
<symbol id="k9" viewBox="0 0 18 18"><circle cx="9" cy="10" r="7.500" fill="#f86818"/><path d="M10 1c7 4 8 11 2 15 4-5 2-9-2-15z" fill="#fcc820"/><circle cx="8" cy="9" r="3.500" fill="#4048c0"/></symbol>
<symbol id="k10" viewBox="0 0 18 18"><path d="M3 1h12v16H3z" fill="#fff"/><path d="M5 3h8v3H5z" fill="#222"/><path d="M5 9h8M5 12h8M5 15h8" stroke="#222" stroke-width="1.500" stroke-dasharray="2 1"/></symbol>
<symbol id="k11" viewBox="0 0 18 18"><path d="M2 5h15v12H2z" fill="#bbb"/><path d="M2 12h15v5H2z" fill="#555"/><text x="2" y="11" font-size="13" font-weight="bold" fill="#e02020">A</text></symbol>
<symbol id="k12" viewBox="0 0 18 18"><path d="M16 1C5 1 1 8 4 16c9 1 11-3 12-9h-6l-2 4h3c-2 3-4 2-4 0 0-4 5-5 9-6z" fill="#2858e0"/></symbol>
<symbol id="k13" viewBox="0 0 18 18"><circle cx="9" cy="5" r="3" fill="none" stroke="#999"/><circle cx="9" cy="11" r="4" fill="#3878c8"/><path d="M9 9l2 2-2 2-2-2z" fill="#cde"/><path d="M4 9l-2 7h4l3-2 3 2h4l-2-7" fill="none" stroke="#999"/></symbol>
<symbol id="tc" viewBox="0 0 18 18"><circle cx="9" cy="9" r="8" fill="#3888c8"/><path d="M3 4h7M6 4v8M14 8c-5-2-6 6 0 5" stroke="#c8f0c0" stroke-width="2" fill="none"/></symbol>
<symbol id="k14" viewBox="0 0 18 18"><circle cx="9" cy="9" r="8" fill="#b8c0cc"/><path d="M1 8c5-4 9 4 16 0M3 13c5-4 9 4 13 0M4 4c4-3 7 3 11 1" stroke="#707888" stroke-width="1.500" fill="none"/></symbol>
<symbol id="k15" viewBox="0 0 18 18"><path d="M3 1h14v16H3z" fill="#e8f4e4" stroke="#3a9040"/><path d="M1 4h10v10H1z" fill="#fff" stroke="#3a9040"/><path d="M3 6l6 7M9 6l-6 7" stroke="#187828" stroke-width="2"/></symbol>
<symbol id="k16" viewBox="0 0 18 18"><path d="M3 1h14v16H3z" fill="#e8eefa" stroke="#3858a8"/><path d="M1 4h11v10H1z" fill="#fff" stroke="#3858a8"/><path d="M3 6l1 6 2-5 2 5 2-6" stroke="#2848a0" stroke-width="1.500" fill="none"/></symbol>
<symbol id="k17" viewBox="0 0 18 18"><path d="M9 1l2.500 5.500 6 .5-4.500 4 1.500 6L9 14l-5.500 3L5 11 .5 7l6-.5z" fill="#fcb818"/></symbol>
<symbol id="k18" viewBox="0 0 18 18"><path d="M1 1h16v16H1z" fill="#e8f4fc"/><path d="M13 5H6v8h7V9H9" fill="none" stroke="#28a0e0" stroke-width="3"/></symbol>
<symbol id="k19" viewBox="0 0 18 18"><circle cx="9" cy="9" r="6.500" fill="#f0b018"/><path d="M9 5l4 7H5z" fill="none" stroke="#222" stroke-width="1.500"/></symbol>
<symbol id="k20" viewBox="0 0 18 18"><path d="M2 2h13v15H2z" fill="#f4f4e8"/><path d="M2 9h13v8H2z" fill="#90c838"/><path d="M17 2l-8 12" stroke="#e08828" stroke-width="2"/><path d="M3 2h12" stroke="#666" stroke-width="2" stroke-dasharray="1 1"/></symbol>
<symbol id="y1" viewBox="0 0 18 18"><circle cx="6" cy="8" r="3" fill="none" stroke="#fff"/><circle cx="12" cy="4" r="3" fill="none" stroke="#fff"/><path d="M2 16c0-6 8-6 8 0M10 10c3-4 6-1 7 2" fill="none" stroke="#fff"/></symbol>
<symbol id="y2" viewBox="0 0 18 18"><path d="M3 12l6-6 6 6" fill="none" stroke="#fff" stroke-width="1.500"/></symbol>
<symbol id="y3" viewBox="0 0 18 18"><path d="M3 1c8 2 12 7 12 12-7 2-13-4-12-12z" fill="#444" stroke="#bbb"/><path d="M4 15h12" stroke="#ccc" stroke-width="2"/></symbol>
<symbol id="y4" viewBox="0 0 18 18"><path d="M1 2l7-1 7 1c0 6-1 11-7 14C2 13 1 8 1 2z" fill="#fff"/><path d="M8 1v15M1 8h14" stroke="#000"/><circle cx="13" cy="13" r="4.500" fill="#18a048"/><path d="M11 13l2 2 3-4" stroke="#fff" fill="none"/></symbol>
<symbol id="y5" viewBox="0 0 18 18"><rect x="2" y="2" width="14" height="15" fill="#fff"/><path d="M3 2h12" stroke="#888" stroke-width="2" stroke-dasharray="2 2"/><text x="6" y="15" font-size="12" font-weight="bold" fill="#111">9</text></symbol>
<symbol id="y6" viewBox="0 0 18 18"><path d="M1 7h3l4-4v12l-4-4H1zM10 6c2 2 2 4 0 6M13 4c3 3 3 7 0 10" fill="none" stroke="#fff"/></symbol>
<symbol id="y7" viewBox="0 0 18 18"><circle cx="9" cy="9" r="7" fill="#fff"/><path d="M9 9L6 2h6zM9 9l7-3v6zM9 9l3 7H6zM9 9l-7 3V6z" fill="#d81828"/></symbol>
<symbol id="y8" viewBox="0 0 18 18"><path d="M6 5h11v8H6M11 13v3M7 16h8M1 3h5v5H1zM3 8v5h4" fill="none" stroke="#fff"/></symbol>
<symbol id="y9" viewBox="0 0 18 18"><path d="M1 0h16v18H1z" fill="#e01018"/><path d="M3 11C2 3 14 2 15 9l-6 0-4 6M9 9l3 6h3" stroke="#fff" stroke-width="1.500" fill="none"/></symbol>
<symbol id="y10" viewBox="0 0 18 18"><path d="M1 2h16v12h-5l-3 4v-4H1z" fill="#fff"/><path d="M4 5h10M4 8h10M4 11h7" stroke="#000"/></symbol>
<symbol id="w-min" viewBox="0 0 46 12"><path d="M22 8h3v2h-3z"/></symbol>
<symbol id="w-up" viewBox="0 0 46 12"><path d="M19 3h8v1h-8zM23 4l3 3h-6zM20 7h6v1h-6z"/></symbol>
<symbol id="w-pin" viewBox="0 0 46 12"><path d="M19 6h4v1h-4zM22 3h1v7h-1zM23 4h4v5h-4z"/><path d="M24 5h2v1h-2z" fill="#fff"/></symbol>
<symbol id="w-x" viewBox="0 0 12 12"><path d="M1 1l10 10M11 1L1 11" fill="none" stroke="currentColor"/></symbol>
</defs>
</svg>

<header class="app-title d-flex align-items-center ps-1 flex-shrink-0">
  <svg width="14" height="14" class="me-1"><use href="#logo"/></svg>
  <span class="flex-grow-1 text-nowrap">Панорама версия 12.5.3 x64 - [D:\!Этап-1\!Алгашка\Русские-Алгаши_%%%.sit, карт: 25, объектов: 176]</span>
  <button aria-label="Закрыть"><svg width="11" height="11"><use href="#w-x"/></svg></button>
</header>
<nav class="app-menu d-flex align-items-center flex-shrink-0 ps-1">
  <svg width="16" height="16" class="me-2"><use href="#logo"/></svg>
  <div class="d-flex flex-grow-1 menu-links">
    <a href="#">Файл</a><a href="#">Правка</a><a href="#">Вид</a><a href="#">Поиск</a><a href="#">Задачи</a><a href="#">База</a><a href="#">Масштаб</a><a href="#">Параметры</a><a href="#">Окно</a><a href="#">Помощь</a>
  </div>
  <div class="mdi d-flex">
    <button aria-label="Свернуть карту"><svg width="18" height="17"><path d="M6 12h6" stroke="currentColor" stroke-width="2"/></svg></button>
    <button aria-label="Восстановить"><svg width="18" height="17"><path d="M5 8h5v4H5zM7 8V5h6v4h-3" fill="none" stroke="currentColor" stroke-width="1.500"/></svg></button>
    <button aria-label="Закрыть карту"><svg width="18" height="17"><path d="M6 6l6 6M12 6l-6 6" stroke="currentColor" stroke-width="2.500"/></svg></button>
  </div>
</nav>
<div class="main-tools flex-shrink-0 d-flex"><div class="main-strip d-flex align-items-center" id="mainbar"><span class="grip-v"></span></div></div>

<main class="work d-flex flex-grow-1">
  <aside class="side flex-shrink-0"><div class="side-in d-flex align-items-start">
    <div class="side-col" id="sideA"><div class="grip-h"></div></div>
    <div class="side-col" id="sideB"><div class="grip-h"></div></div>
  </div></aside>
  <section class="map-pane flex-grow-1">
  <svg viewBox="62 75 1826 937" preserveAspectRatio="xMinYMin slice" shape-rendering="crispEdges" fill="none" stroke="#f21f8f" stroke-width="4" stroke-linejoin="round" stroke-linecap="round">
    <defs>
      <path id="shape" d="M84,96L200,96 240,91 280,87 330,84 380,84 403,89 418,98 430,130 445,165 453,200 463,225 474,248 491,271 510,277 543,280 560,270 588,261 600,260 622,269 640,280 660,287 690,299 730,310 765,322 798,336 817,357 820,370 830,400 845,430 855,452 875,473 850,600 853,635 857,630 865,630 866,637 862,650 866,675 878,692 887,710 903,711 915,708 925,710 935,723 950,723 965,718 980,714 990,700 1003,690 1020,685 1038,677 1042,665 1052,657 1075,642 1085,636 1098,632 1106,633 1111,642 1115,665 1118,690 1120,780 1118,850 1113,890 1104,919 1098,920 1093,918 1085,900 1068,863 1040,846 1026,831 1012,833 1004,830 992,816 966,805 955,794 880,768 857,764 845,755 830,748 823,745 813,728 800,720 760,709 757,700 754,620 740,600 716,578 690,553 670,532 655,527 640,533 605,545 597,556 585,556 577,540 560,520 545,508 520,503 500,508 487,520 480,529 465,518 450,511 425,508 400,503 377,503 365,495 340,478 310,463 292,455 284,444 288,400 275,390 255,386 215,382 190,390 182,405 181,435 185,448 175,460 150,500 145,528 135,550 132,564 125,570 108,562 98,558 80,540 72,520 66,460 63,400 63,250 68,180 76,120z"/>
      <clipPath id="clip"><use href="#shape"/></clipPath>
    </defs>
    <use href="#shape" fill="#80ff80" stroke-width="8" clip-path="url(#clip)"/>
    <g stroke="none" fill="#ebebeb">
      <path d="M80,110L83,110 83,525 76,505 70,440 66,340 67,250 72,180z"/>
      <path d="M227,348H254V375L227,372zM258,350L262,352 278,382 258,378z"/>
      <path d="M443,207L458,240 458,262 385,253 388,238 400,239 428,226z"/>
    </g>
    <path d="M75,160C72,190 74,240 76,300L80,328 87,340M85,99V527M88,99H400"/>
    <g fill="#f21f8f" stroke-width="1">
      <path d="M86,97L200,97 240,91 290,87 330,85 375,85 402,88 418,98 418,101H300L250,101 200,108 160,111 122,111 100,105z"/>
      <path d="M402,89L418,98 430,132 446,168 454,200 464,225 474,248 485,265 474,278 474,253H460L453,222 443,192 437,190 425,145 412,108 400,98z"/>
      <path d="M318,88H345L351,100 340,122 334,135 335,162 341,190 345,225V265H330L318,248 308,237 307,215 315,180 323,162 319,140 320,101z"/>
      <path d="M87,337L105,347 117,356 123,375 125,405 121,425 112,445 111,460 125,452 135,435 147,432 158,432 163,436 160,444 145,446 130,458 118,473 103,482 86,485V475L100,455 104,445 110,425 111,385 105,362 87,345z"/>
      <path d="M141,400V385L148,375 170,361 195,350 215,340 240,328 258,326 275,336 295,355 315,378 330,405 345,410 370,416 385,428 412,442 425,440 440,432 457,430 475,436 500,438 513,438 530,450 545,455 562,462 582,478H613L622,492 640,503 670,518 690,523 720,525 735,530 760,545 780,560 814,590V623H758L742,600 717,578 690,553 670,532 655,527 640,533 605,545 597,555H585L577,540 560,520 545,508 520,503 500,508 487,520 480,529 465,518 440,511 400,503 377,503 365,495 340,478 335,463 334,441H325L313,457 305,450 292,455 284,444 290,400 275,390 255,386 215,382 190,390 182,405 181,435 185,448 175,460 150,500 145,528 135,550 132,564 125,569 108,562 98,557 82,540 84,527 98,540 108,550 115,545 125,525 145,490 171,448 167,430V390L178,375 160,382 152,395 153,415 163,435 145,432z"/>
      <path d="M362,305L474,308 495,302 530,307 558,297 577,278 597,264 612,285 640,303 660,312 690,322H735L765,323 798,337 816,357 830,400 840,440 857,470 875,480H835L815,430 800,400 793,375 775,362 740,350 700,345 655,335 640,332 615,318 604,312 605,330 640,348 700,352 715,358 740,370 758,385 765,405 775,420 778,450 776,470 774,490 790,510 800,520 795,540 780,560 765,545 775,525 760,505 750,485 745,460 757,440 755,425 740,405 720,380 690,368 640,362 605,352 595,332 575,328 530,335 508,347 478,350 465,345 445,345 405,343 415,352 442,362 430,370 400,380 385,375 373,362 373,335z"/>
      <path d="M375,373L385,378 372,392 370,398H362L364,390zM358,401h3v3h-3z"/>
      <path d="M740,535L770,540 790,530 815,545V600L850,620 853,635 857,630 865,632 862,650 866,675 878,692 887,710 903,711 925,708 935,723H950L980,714 990,700 1003,690 1038,678 1042,665 1052,657 1085,636 1098,632 1106,634 1111,650 1103,660 1080,672 1070,684 1040,692 1010,712 992,730 988,745 965,738 940,733 925,720 915,720 905,728 870,729 853,728 845,715 838,712 828,718 820,712 818,700 812,718 832,737 866,754 877,757 940,777 987,791 1000,803 1020,805 1045,818 1060,812 1078,803 1085,830 1100,870V918L1085,900 1068,863 1040,846 1026,831 1012,833 1004,830 992,816 966,805 955,794 880,768 857,764 845,755 823,745 813,728 800,720 757,708 754,620z"/>
      <path d="M903,726L915,724 919,730 911,741 904,733zM938,734L952,733 955,741 950,746 940,744zM977,748L1000,741 1009,746 1006,752 996,757 990,778H986L982,758z"/>
      <path d="M1101,655L1108,670 1106,735 1103,760 1107,790 1108,840 1104,880 1100,880z"/>
    </g>
    <g stroke-width="14">
      <path d="M478,264L496,280 516,285 545,287 562,278 597,268 625,280 642,289 690,307 765,330 793,344 809,362 814,385 826,415 846,452 862,470"/>
    </g>
    <g stroke="none" fill="#ebebeb">
      <path d="M347,90L380,88 398,91 404,97H352z"/>
      <path d="M476,297L487,292 483,276 493,288 520,294 545,295 558,286 560,290 558,297 540,302 515,303 495,301 476,306z"/>
      <path d="M564,291L570,283 592,270 583,281 569,294zM592,276L597,270 604,277z"/>
      <path d="M606,272L613,274 628,288 647,299 687,311 735,321 690,323 672,319 652,308 622,293z"/>
      <path d="M395,315L446,314 440,322 410,320z"/>
      <path d="M289,402L293,405 297,395 300,405 303,440 303,452 294,446 287,440z"/>
      <path d="M313,460L318,446 330,440 336,462 350,463 362,477 370,490 362,490 340,476 315,465z"/>
      <path d="M390,499L420,495 446,495 436,502 405,503zM445,507L470,497 500,489 535,482 548,490 556,498 540,493 520,490 500,495 485,506 472,512z"/>
      <path d="M573,505L596,504 603,512 600,525 590,535 585,530z"/>
      <path d="M1110,682L1114,700 1115,780 1113,850 1106,905 1104,912 1104,890 1108,850 1109,800 1106,765 1109,720z"/>
      <path d="M1032,833L1045,837 1060,834 1074,827 1082,850 1092,880 1100,905 1090,895 1075,858 1064,842 1050,838z"/>
      <path d="M1052,678L1062,664 1080,655 1066,666 1058,680z"/>
    </g>
    <path d="M290,402L284,440 292,452 310,462 345,480 370,497M310,440V460"/>
    <g stroke="#ebebeb" stroke-width="2">
      <path d="M493,277L510,284 545,286M470,275L478,288M770,335L788,350 797,365 798,378 815,405 830,440 846,474M780,337L795,350 803,375 822,410 840,450 855,474M995,705L1015,695M606,510L620,502M1060,820L1072,818M590,535L600,526"/>
    </g>
    <g stroke="none" fill="#80ff80">
      <path d="M100,102H160L125,106z"/>
      <path d="M207,357L217,350V368L205,366zM220,352H223V372H220z"/>
      <path d="M87,346L99,352V438L87,456zM103,353L110,362 111,390 108,410 103,425z"/>
      <path d="M91,472L97,458 110,453 100,464zM105,484L122,470 130,457 142,446V490L125,525 114,545 108,548 104,543zM87,486L99,484V538L87,526z"/>
      <path d="M317,421L342,425 328,429 317,438zM180,373L203,365 190,378 182,382z"/>
      <path d="M582,310L600,305 625,318 650,333 645,337 620,327z"/>
      <path d="M392,350L398,356 395,365 391,361zM695,535L705,537 730,562 742,575 735,578 710,556z"/>
      <path d="M738,533L745,540 765,560 750,562zM770,545L800,543 793,570 788,560zM742,570L754,580 752,587zM785,610L800,603 812,606 812,620 784,622z"/>
      <path d="M770,616L785,640 783,670 771,640zM790,632L806,652 805,670 790,685zM825,645L830,662H822zM838,652L845,655 843,662zM833,685L840,672 847,683 835,690zM808,685L815,695 812,700zM851,698L860,695 864,710 852,725z"/>
      <path d="M1000,722L1045,700 1078,690 1101,668V755L1101,855 1090,838 1077,803 1060,805 1045,818 1020,812 1005,805 990,800 985,790 992,735z"/>
      <path d="M1078,672L1101,655V662L1080,678z"/>
    </g>
    <g>
      <path d="M170,361L180,356 190,353 198,343 212,338 222,330 235,322 255,318 272,324 290,340 300,351 315,360 328,380 340,410M195,352L215,339 240,327 255,325 275,332 295,353 308,365 320,382 334,410"/>
      <path d="M102,352V440M144,445V495M101,482V545M179,372V385M218,348V372M226,346V374M255,344V380"/>
      <path d="M293,101L306,112 309,140 320,158M302,101L312,112 314,138 322,150M310,101L317,115 318,140"/>
      <path d="M350,100L338,120M397,101L398,110 392,114H375L345,127 337,137 342,158 345,185 355,215 358,253M404,101L410,130 414,145 394,156H352L347,165 350,190 362,218 366,253M427,174L394,191H366L368,218 374,235 373,253M433,190L395,209H380V240L376,253M436,198L395,217H384V253M440,205L395,231H388M443,213L425,228 398,238H388M443,192L450,225 455,240 452,253"/>
      <path d="M594,333V365L605,372 625,371 642,378 652,382H690L705,395 730,412 757,438M600,337V352L608,361 638,362 650,372 690,374 712,384 740,410"/>
      <path d="M731,413L718,450 716,464 706,470 704,485 710,500 719,510 717,523M757,442L740,460 748,490 756,508 768,512 780,525M762,460V475M748,460L757,495 770,505"/>
      <path d="M640,335L700,346 730,355 755,367 763,395 775,415 778,440 785,452 798,465 805,455 815,475M770,365L780,400 795,440 808,460 820,478M785,467L800,477 814,497 800,520 793,542M735,532L746,508 755,520 764,530M835,470L848,480"/>
      <path d="M992,735L1010,724 1040,710 1065,695 1100,672M992,745L1012,724 1030,724 1052,712 1060,700 1092,685 1102,670"/>
      <path d="M1102,708L1083,707 1060,727 1048,735 1035,738 1025,748 1020,760 1008,770 1006,785 1015,800 1005,803M1102,717L1085,717 1060,737 1042,760 1042,775 1053,800 1050,810 1045,812 1040,804 1012,806M1102,725L1090,735 1072,760 1075,775 1102,825M1102,735L1090,750 1088,762 1095,780 1103,790M1060,812L1070,804 1078,805M1103,640V915"/>
    </g>
    <g stroke="#80ff80" stroke-width="2">
      <path d="M316,175C310,190 308,205 312,215M323,175L318,225M328,190L330,235M308,116L310,140"/>
      <path d="M565,308L575,303 592,306M588,299L594,294M600,296L606,293M601,302L612,303M603,310L615,308 630,318 645,330M592,338L608,344 622,340M462,325L480,325 495,322 512,325 520,319M405,325L460,327M615,345L640,348M730,335L745,340M690,338L725,340 760,352 775,370 780,400 785,430M650,350L680,352"/>
      <path d="M370,436L400,460 420,470M380,435L405,445 430,468 470,465 490,460M420,445L455,440M430,480L460,475 480,470M440,455L460,455M560,480L580,490M605,528L620,518 640,514M610,484L620,490M720,545L730,560M500,440L530,455"/>
      <path d="M760,460L768,495 790,510 800,508M772,500L785,520M775,575L782,588M790,700L812,706M795,695L802,712M830,705L842,702M822,625L832,640M990,738L1008,724 1040,706M768,645L780,665M800,550L798,575"/>
    </g>
  </svg>
  </section>
  <aside class="rside flex-shrink-0"><div class="rcol" id="sideR"><div class="grip-h"></div></div></aside>
</main>

<footer class="flex-shrink-0">
  <div class="status d-flex"><div class="flex-grow-1">Согласованное сглаживание: ВЫБЕРИТЕ ОБЪЕКТ</div><div class="cell c-atlas">Атлас не открыт</div></div>
  <div class="status d-flex"><div class="c-xy">X=   320 374.22 m     Y= 1 184 811.77 m  (МСК63)</div><div class="cell c-scale text-center">1 : 25 000</div><div class="cell flex-grow-1">Русские-Алгаши_1%_000_ПОЛИГОНЫ   (объектов : 14)</div></div>
</footer>
<div class="taskbar d-flex flex-shrink-0">
  <div class="d-flex" id="tkA"></div>
  <button class="tk-win tk-first"><svg><use href="#chrome"/></svg>Ошибки и пожелан...</button>
  <div class="d-flex tk-set" id="tkB"></div>
  <button class="tk-win ms-1"><svg><use href="#logo"/></svg>Панорама версия 12...</button>
  <button class="tk-win active mx-1"><svg><use href="#logo"/></svg>Редактор карты</button>
  <button class="tk-win"><svg><use href="#tc"/></svg>Total Commander (x6...</button>
  <div class="d-flex tk-set" id="tkC"></div>
  <div class="tray d-flex ms-auto align-items-center"><span class="me-4">RU</span><div class="d-flex" id="tkD"></div><span class="ms-2">12:50</span><button class="tk ms-3 me-3" aria-label="Уведомления"><svg><use href="#y10"/></svg></button><span class="me-1 h-100 border-start border-secondary"></span></div>
</div>

<section class="win palette" aria-label="Точка">
  <div class="palette-top"></div>
  <div class="palette-title d-flex align-items-center"><span class="flex-grow-1">Точка</span><button class="palette-close" aria-label="Закрыть панель"><svg width="12" height="12"><path d="M1 1l10 10M11 1L1 11" stroke="#000" stroke-width="2"/></svg></button></div>
  <div class="palette-tools d-flex" id="pal"></div>
</section>

<section class="win msg d-flex flex-column" role="dialog" aria-label="Редактор карты">
  <div class="msg-title d-flex align-items-center pt-1"><span class="ps-1">Редактор карты</span><button aria-label="Свернуть"><svg width="46" height="12"><use href="#w-min"/></svg></button><button aria-label="В строку"><svg width="46" height="12"><use href="#w-up"/></svg></button><button aria-label="Закрепить"><svg width="46" height="12"><use href="#w-pin"/></svg></button></div>
  <div class="msg-body d-flex flex-grow-1 align-items-center"><svg width="32" height="32" viewBox="0 0 32 32"><path d="M16 1L31 31H1z" fill="#ffe000" stroke="#fcb814" stroke-width="1.500"/><path d="M15 12h2v10h-2zM15 24h2v3h-2z" fill="#000"/></svg><span>Ошибка согласованного сглаживания</span></div>
  <div class="msg-foot text-end"><button class="msg-ok d-inline-flex align-items-center justify-content-center">OK</button></div>
</section>

<section class="win dlg" role="dialog" aria-label="Параметры редактора векторной карты">
  <div class="dlg-title d-flex"><svg width="15" height="14" viewBox="0 0 15 14"><circle cx="7.500" cy="6" r="6.500" fill="#8a7648" stroke="#54482c" stroke-dasharray="2 1"/><circle cx="7.500" cy="6" r="3.500" fill="#b8a468" stroke="#443"/><circle cx="7.500" cy="6" r="1.500" fill="#333"/></svg><span class="flex-grow-1">Параметры редактора векторной карты</span><button aria-label="Свернуть окно"><svg width="46" height="12"><use href="#w-min"/></svg></button><button aria-label="Свернуть в строку"><svg width="46" height="12"><use href="#w-up"/></svg></button><button aria-label="Закрепить окно"><svg width="46" height="12"><use href="#w-pin"/></svg></button><button aria-label="Закрыть окно" class="x-btn"><svg width="11" height="11"><use href="#w-x"/></svg></button></div>
  <div class="dlg-tabs d-flex"><button class="on">Общие</button><span class="bar"></span><button>Векторизатор</button><button>Автофигуры</button><button>Главная панель</button><button>Горячие клавиши</button></div>
  <form class="dlg-body">
    <div class="d-flex justify-content-between">
      <div class="colL">
        <fieldset class="grp g-cut"><legend>Объекты по рамкам</legend>
          <div class="d-flex"><label class="opt"><input type="radio" name="cut">Не резать</label><label class="opt"><input type="radio" name="cut" checked>Разрезать</label><label class="opt"><input type="radio" name="cut">Обрезать</label></div></fieldset>
        <fieldset class="grp g-new"><legend>Создание новых объектов</legend>
          <label class="opt"><input type="checkbox" checked>Запрос семантики</label><label class="opt"><input type="checkbox">3D метрика</label><label class="opt"><input type="checkbox">Расставлять точки пересечений</label><label class="opt"><input type="checkbox">Трассировка</label></fieldset>
        <fieldset class="grp g-gen"><legend>Общие</legend>
          <label class="opt"><input type="checkbox" checked>Запрет редактирования рамок листов</label><label class="opt"><input type="checkbox">Работа с наборами объектов</label><label class="opt"><input type="checkbox">Отображать статистику</label><label class="opt"><input type="checkbox">Дополнительные курсоры</label><label class="opt"><input type="checkbox" checked>Вспомогательные панели</label><label class="opt"><input type="checkbox" checked>Сбрасывать выбор после записи</label><label class="opt"><input type="checkbox">Запомнить дату и время изменения объекта</label></fieldset>
      </div>
      <div class="colR">
        <fieldset class="grp g-size"><legend>Размеры и допуски</legend>
          <div class="unit-row d-flex align-items-center justify-content-between"><label for="unit">Единица измерения</label><select id="unit" class="pick unit"><option>мм на карте</option></select></div>
          <div class="d-flex size-row"><input class="fld" id="s1" value="0.010"><label for="s1">Допуск согласования</label></div>
          <div class="d-flex size-row"><input class="fld" id="s2" value="0.500"><label for="s2">Уровень фильтрации</label></div>
          <div class="d-flex size-row"><input class="fld" id="s3" value="0.600"><label for="s3">Ширина двойной линии (зоны)</label></div>
          <div class="d-flex size-row"><input class="fld" id="s4" value="0.60"><label for="s4">Шаг трассировки</label></div>
          <div class="d-flex size-row"><input class="fld" id="s5" value="5"><label for="s5">Радиус захвата (пикс.)</label></div>
          <div class="d-flex size-row"><input class="fld" id="s6" value="0.001"><label for="s6">Длина минимального отрезка при разрезании рамкой</label></div></fieldset>
        <fieldset class="grp g-move"><legend>Перемещение группы объектов</legend>
          <div class="d-flex align-items-center"><span>Отображать:</span><label class="opt w1"><input type="radio" name="show" checked>Все</label><label class="opt w2"><input type="radio" name="show">Только</label><input class="fld" aria-label="Число" value="1500" disabled></div>
          <div class="d-flex pt-1"><label class="opt off w3"><input type="checkbox" disabled>Первые</label><label class="opt off"><input type="checkbox" checked disabled>Случайно</label></div></fieldset>
      </div>
    </div>
    <fieldset class="grp g-spl"><legend>Сплайн</legend>
      <div class="d-flex align-items-center"><label class="opt w1"><input type="radio" name="spl" checked>Статический</label><label class="opt w2"><input type="radio" name="spl">Динамический</label><label for="arc" class="w3">Точек в дуге:</label><input class="fld" id="arc" value="4"><label for="smo" class="w4">Сглаживание (1...10):</label><input class="fld" id="smo" value="5"></div></fieldset>
    <div class="area-row d-flex align-items-start"><label for="area">Единица отображения площади объекта</label><select id="area" class="pick"><option>кв.м</option></select><button type="button" class="push">Сброс</button></div>
    <button type="button" class="push wide">Настроить условия сшивки объектов</button>
    <div class="push-row d-flex"><button type="button" class="push">Установить</button><button type="button" class="push">Сбросить все</button><button type="button" class="push">Отмена</button><button type="button" class="push">Помощь</button></div>
  </form>
  <div class="note-box"></div>
  <div class="note-text">что не так? сечение 0,5 м</div>
</section>

<script>
// Builds the icon strips: "|" is a divider, "-" a gap, "*" marks a pressed tool, "+" a tool with a submenu
function strip(id, list, cls){
  const host = document.getElementById(id);
  list.trim().split(/\s+/).forEach(t => {
    if (t === '|') { host.insertAdjacentHTML('beforeend', '<span class="bar-sep"></span>'); return; }
    if (t === '-') { host.insertAdjacentHTML('beforeend', '<span class="tk-gap"></span>'); return; }
    const name = t.replace(/[*+]/g, '');
    host.insertAdjacentHTML('beforeend', `<button class="${cls}${t.includes('*')?' pressed':''}${t.includes('+')?' more':''}" aria-label="${name}"><svg><use href="#${name}"/></svg></button>`);
  });
}
strip('mainbar','open opendb openweb weblist | layers tree | bino binoa binod binox list t1 t2 t3 t4 t5 | shapes | bolt | zout zin one fit | okk backk | curx | curtab lista | paint | route | print print2 | help','tool');
strip('sideA','pen+ pen2+ pen3 brush+ scis+ delx+ pnt*+ seg+ ruler+ fla+ hh+ abc+ flash+ org+ undos fwd sqs+','tool');
strip('sideB','pen4 pen5 pen6 move4 align+ gdel yarr segarc mvsh flh+ rot abc zdoc conv undol bwd gear','tool');
strip('sideR','r1 r2 r3 r4 r5 r6 r7 r8 r9* r10 r11 shapes door','tool');
strip('pal','yarr star6 minp plup circ uturn fan fan2* iron iron2 rotg rotl ang perp rect1','tool');
strip('tkA','k0 k1 - k2 - k3 k4 k5 k6 k7 k8','tk');
strip('tkB','k9 k10 k11 k12 k13','tk');
strip('tkC','k14 k15 k16 k17 k18 k19 k20','tk');
strip('tkD','y1 - y2 y3 y4 y5 y6 y7 y8 y9','tk');
</script>
</body>
</html>
